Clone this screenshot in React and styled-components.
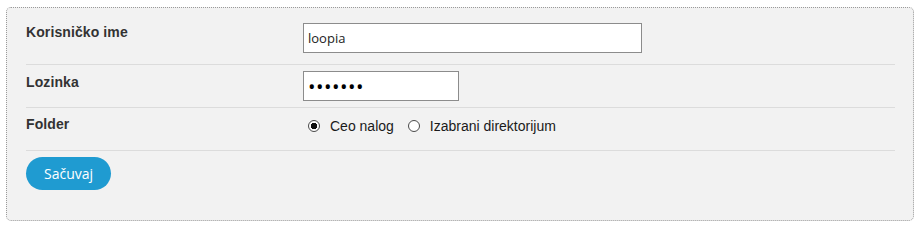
import React, { useEffect, useRef } from 'react';
import styled, { createGlobalStyle } from 'styled-components';

const GlobalStyle = createGlobalStyle`
  html, body {
    margin: 0;
    padding: 0;
    background: #ffffff;
  }
  body {
    font-family: "Liberation Sans", Arial, sans-serif;
  }
`;

const Panel = styled.form`
  box-sizing: border-box;
  margin: 7px 6px;
  height: 214px;
  padding: 0 18px 0 19px;
  background-color: #f2f2f2;
  border: 1px dotted #9a9a9a;
  border-radius: 5px;
`;

const Row = styled.div`
  display: grid;
  grid-template-columns: 277px 1fr;
  align-items: start;
  padding: ${(p) => p.$pad};
  border-bottom: 1px solid #dcdcdc;
`;

const Label = styled.label`
  display: block;
  padding-top: ${(p) => p.$top || '2px'};
  font-family: "Liberation Sans", Arial, sans-serif;
  font-size: 14px;
  line-height: 16px;
  font-weight: bold;
  letter-spacing: 0.1px;
  color: #333333;
`;

const TextInput = styled.input`
  box-sizing: border-box;
  display: block;
  width: ${(p) => p.$width};
  height: 30px;
  margin: 0;
  padding: 0 4px;
  background: #ffffff;
  border: 1px solid #8c8c8c;
  border-radius: 0;
  font-family: "Open Sans", "Noto Sans", sans-serif;
  font-size: 13px;
  color: #222222;
  caret-color: #000000;
  outline: none;
  &[type='password'] {
    font-size: 20px;
    letter-spacing: 0.5px;
    color: #000000;
  }
`;

const Options = styled.div`
  display: flex;
  align-items: center;
  padding: 4px 0 0 5px;
`;

const Option = styled.label`
  display: flex;
  align-items: center;
  gap: 10px;
  margin-right: 14px;
  font-family: "Liberation Sans", Arial, sans-serif;
  font-size: 14px;
  line-height: 16px;
  color: #1a1a1a;
  cursor: pointer;
`;

const Radio = styled.input`
  appearance: none;
  box-sizing: border-box;
  width: 12px;
  height: 12px;
  margin: 0;
  border: 1px solid #4a4a4a;
  border-radius: 50%;
  background: #ffffff;
  &:checked {
    background: radial-gradient(circle, #111111 0 3px, #ffffff 3.5px);
  }
`;

const Footer = styled.div`
  padding-top: 6px;
`;

const SaveButton = styled.button`
  box-sizing: border-box;
  height: 33px;
  padding: 0 18px;
  background-color: #1f9bd1;
  border: none;
  border-radius: 17px;
  font-family: "Open Sans", "Noto Sans", sans-serif;
  font-size: 14px;
  color: #ffffff;
  cursor: pointer;
`;

function App() {
  const userRef = useRef(null);

  useEffect(() => {
    const el = userRef.current;
    if (el) {
      el.focus();
      el.setSelectionRange(el.value.length, el.value.length);
    }
  }, []);

  return (
    <>
      <GlobalStyle />
      <Panel onSubmit={(e) => e.preventDefault()}>
        <Row $pad="15px 0 11px">
          <Label htmlFor="username" $top="1px">Korisničko ime</Label>
          <TextInput id="username" ref={userRef} $width="339px" defaultValue="loopia" />
        </Row>
        <Row $pad="6px 0 6px">
          <Label htmlFor="password" $top="3px">Lozinka</Label>
          <TextInput id="password" type="password" $width="156px" defaultValue="loopia1" />
        </Row>
        <Row $pad="6px 0 16px">
          <Label as="div">Folder</Label>
          <Options>
            <Option>
              <Radio type="radio" name="folder" defaultChecked />
              Ceo nalog
            </Option>
            <Option>
              <Radio type="radio" name="folder" />
              Izabrani direktorijum
            </Option>
          </Options>
        </Row>
        <Footer>
          <SaveButton type="submit">Sačuvaj</SaveButton>
        </Footer>
      </Panel>
    </>
  );
}

export default App;
